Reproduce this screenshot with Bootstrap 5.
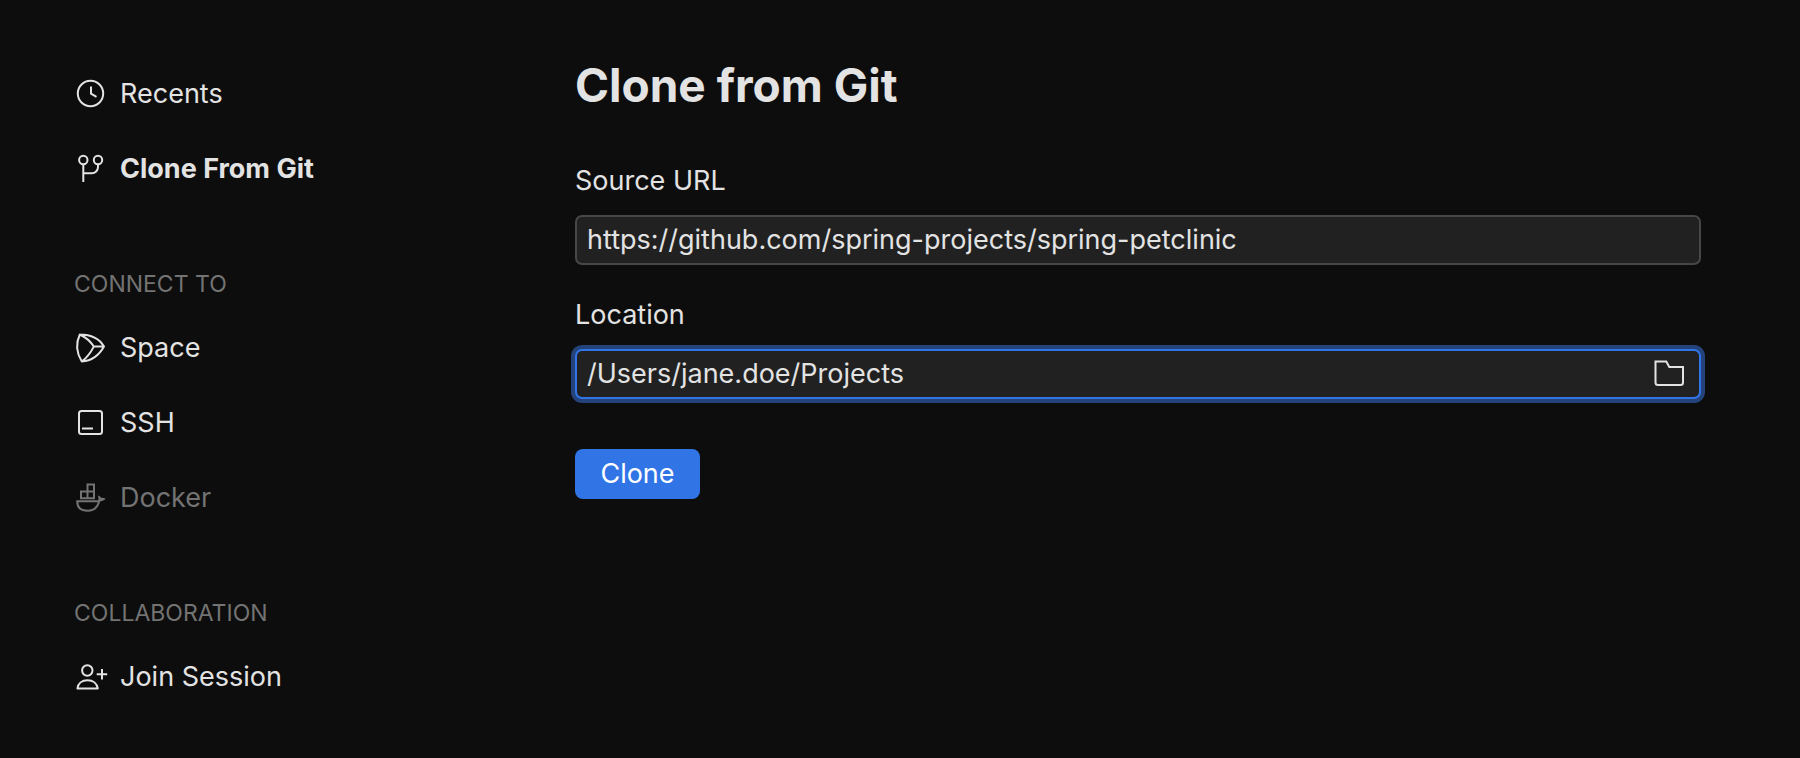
<!DOCTYPE html>
<html lang="en">
<head>
<meta charset="utf-8">
<meta name="viewport" content="width=device-width, initial-scale=1">
<title>Clone from Git</title>
<link href="https://cdn.jsdelivr.net/npm/bootstrap@5.3.0/dist/css/bootstrap.min.css" rel="stylesheet">
<style>
  body { background: #0d0d0d; color: #e3e3e3; font-family: Inter, sans-serif; font-size: 27px; line-height: 36px; }
  .sidebar { flex: 0 0 500px; padding-top: 56px; }
  .welcome { padding-left: 75px; padding-right: 99px; }
  .side-link { height: 75px; gap: 15px; color: #e3e3e3; text-decoration: none; }
  .side-link.off { color: #737373; }
  .side-link.current { font-weight: 700; }
  .side-title { font-size: 23px; line-height: 24px; font-weight: 400; color: #737373; margin: 66px 0 14px -1px; }
  .ico { width: 30px; height: 32px; overflow: visible; flex: none; fill: none; stroke: currentColor; stroke-width: 2; }
  .page-title { font-size: 46px; line-height: 56px; font-weight: 700; margin-bottom: 50px; }
  .content { padding-top: 57px; }
  .field-label { margin-bottom: 16px; line-height: 36px; }
  .field { height: 50px; background: #212121; border: 2px solid #474747; border-radius: 7px; padding: 0 12px 0 10px; }
  .field input { background: none; border: 0; outline: 0; padding: 0; color: #e3e3e3; }
  .field.active { border-color: #3074e6; box-shadow: 0 0 0 4px #24437a; }
  .field button { background: none; border: 0; color: #e3e3e3; line-height: 0; padding: 0 3px; }
  .field-gap { margin-bottom: 32px; }
  .btn-clone { margin-top: 50px; height: 50px; width: 125px; font-size: 27px; line-height: 36px; padding: 0; border: 0; border-radius: 8px; --bs-btn-color: #fff; --bs-btn-bg: #3074e6; --bs-btn-hover-color: #fff; --bs-btn-hover-bg: #4483ee; }
</style>
</head>
<body>
<div class="welcome d-flex">
  <nav class="sidebar" aria-label="Welcome">
    <a class="side-link d-flex align-items-center" href="#">
      <svg class="ico" viewBox="0 0 30 32" aria-hidden="true"><circle cx="15.5" cy="15.5" r="12.7"/><path d="M16 8.500v7.200l5.500 3.200"/></svg>
      <span>Recents</span></a>
    <a class="side-link current d-flex align-items-center" href="#" aria-current="page">
      <svg class="ico" viewBox="0 0 30 32" aria-hidden="true"><circle cx="8.300" cy="7" r="4.200"/><circle cx="23" cy="7" r="4.200"/><path d="M8.300 11.200V29M23 11.200V14a6.300 6.300 0 0 1-6.300 6.300H8.300"/></svg>
      <span>Clone From Git</span></a>
    <h2 class="side-title">CONNECT TO</h2>
    <a class="side-link d-flex align-items-center" href="#">
      <svg class="ico" viewBox="0 0 30 32" aria-hidden="true"><path stroke-linejoin="round" d="M4.800 2.500C15 2.500 23.500 5 29 14.600 24 23.500 17 29 6.800 29.600 1 20 1 10.500 4.800 2.500C12 6 15.500 9 18.800 14.600 15.500 21 12 25.500 6.800 29.600M18.800 14.600H29"/></svg>
      <span>Space</span></a>
    <a class="side-link d-flex align-items-center" href="#">
      <svg class="ico" viewBox="0 0 30 32" aria-hidden="true"><rect x="4" y="4" width="23" height="23" rx="2.500"/><path d="M7 21.500h11"/></svg>
      <span>SSH</span></a>
    <a class="side-link off d-flex align-items-center" href="#" aria-disabled="true">
      <svg class="ico" viewBox="0 0 30 32" aria-hidden="true"><path d="M12.500 16.200V2.500H19v13.700H6V9.500h13M2.200 19.200H24.300C22.500 25 19 28.800 13 28.800 6 28.800 2.200 25.500 2.200 19.200Z"/><path fill="currentColor" stroke="none" d="M23 13.500c1.800.5 2.800 1.500 3.200 2.300 1.500-.2 3 .1 4.500 1-1.500 1.800-3.500 2.500-5.700 2.400l-2 .8c.6-2.200.6-4.300 0-6.500Z"/></svg>
      <span>Docker</span></a>
    <h2 class="side-title">COLLABORATION</h2>
    <a class="side-link d-flex align-items-center" href="#">
      <svg class="ico" viewBox="0 0 30 32" aria-hidden="true"><circle cx="12.300" cy="9.500" r="5.200"/><path stroke-linejoin="round" d="M2.400 27.500C3 22.500 7 19.300 12.500 19.300S22 22.500 22.800 27.500ZM27 8v10.500M21.700 13.200h10.500"/></svg>
      <span>Join Session</span></a>
  </nav>
  <main class="content flex-grow-1">
    <h1 class="page-title">Clone from Git</h1>
    <form>
      <label class="field-label d-block" for="source">Source URL</label>
      <div class="field field-gap d-flex align-items-center">
        <input class="flex-grow-1" id="source" type="text" value="https://github.com/spring-projects/spring-petclinic">
      </div>
      <label class="field-label d-block" for="location">Location</label>
      <div class="field active d-flex align-items-center">
        <input class="flex-grow-1" id="location" type="text" value="/Users/jane.doe/Projects">
        <button type="button" aria-label="Browse folders"><svg class="ico" viewBox="0 0 30 32" aria-hidden="true"><path d="M1.500 3.500h10.800l3 5.500H29v15.500a2.500 2.500 0 0 1-2.500 2.500H4a2.500 2.500 0 0 1-2.500-2.500Z"/></svg></button>
      </div>
      <button class="btn btn-clone" type="button">Clone</button>
    </form>
  </main>
</div>
<script src="https://cdn.jsdelivr.net/npm/bootstrap@5.3.0/dist/js/bootstrap.bundle.min.js"></script>
</body>
</html>
